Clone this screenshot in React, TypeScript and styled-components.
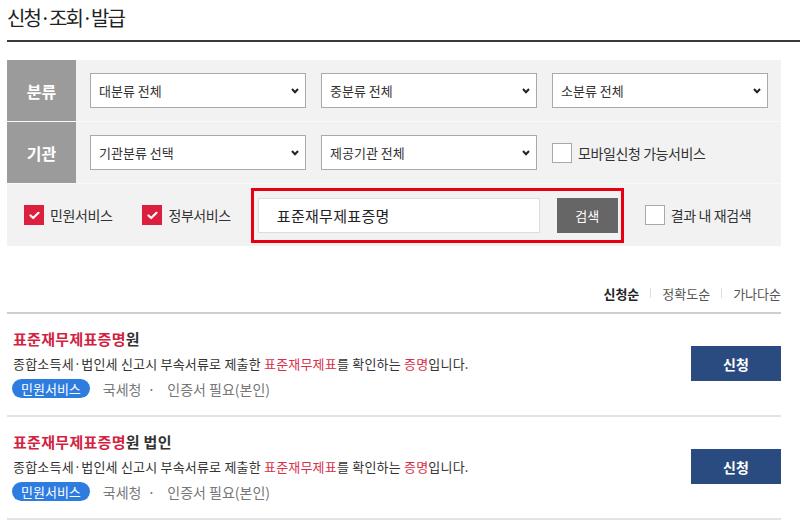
import React from "react";
import styled, { createGlobalStyle } from "styled-components";

const Global = createGlobalStyle`
  html, body { margin: 0; padding: 0; background: #fff; }
  body { font-family: "Noto Sans CJK KR", "Noto Sans", sans-serif; color: #333; }
  * { box-sizing: border-box; }
`;

const Page = styled.div`
  width: 800px;
  height: 530px;
  overflow: hidden;
  padding-left: 7px;
`;

const Header = styled.div`
  height: 42px;
  border-bottom: 2px solid #3a3a3a;
  display: flex;
  align-items: flex-start;
`;

const Title = styled.h1`
  margin: 4px 0 0;
  font-size: 20px;
  font-weight: 400;
  color: #222;
  letter-spacing: -2px;
  line-height: 28px;
`;

const Content = styled.div`
  width: 774px;
`;

const Filter = styled.div`
  margin-top: 18px;
  background: #f2f2f2;
  display: flex;
  flex-direction: column;
`;

const Row = styled.div`
  display: flex;
  align-items: center;
  height: 62px;
  border-bottom: 1px solid #f9f9f9;
`;

const Label = styled.div`
  width: 69px;
  flex-shrink: 0;
  align-self: stretch;
  background: #9b9b9b;
  color: #fff;
  font-size: 16px;
  font-weight: 700;
  display: flex;
  align-items: center;
  justify-content: center;
  margin-right: 14px;
`;

const SelectWrap = styled.div`
  position: relative;
  width: 216px;
  flex-shrink: 0;
  height: 35px;
  margin-right: 15px;
`;

const Select = styled.select`
  appearance: none;
  width: 100%;
  height: 100%;
  border: 1px solid #a9a9a9;
  background: #fff;
  font-family: inherit;
  font-size: 13px;
  color: #333;
  padding: 0 28px 0 8px;
  border-radius: 0;
  outline: none;
`;

const Chevron = styled.svg`
  position: absolute;
  right: 7px;
  top: 15px;
  pointer-events: none;
`;

const CheckLabel = styled.label<{ $gap?: number }>`
  display: flex;
  align-items: center;
  gap: 6px;
  font-size: 14px;
  letter-spacing: -0.4px;
  color: #333;
  margin-right: ${(p) => p.$gap ?? 0}px;
  white-space: nowrap;
`;

const Box = styled.span<{ $on?: boolean }>`
  width: 20px;
  height: 20px;
  flex-shrink: 0;
  display: inline-flex;
  align-items: center;
  justify-content: center;
  background: ${(p) => (p.$on ? "#dc1f3e" : "#fff")};
  border: 1px solid ${(p) => (p.$on ? "#dc1f3e" : "#a8a8a8")};
`;

const SearchRow = styled(Row)`
  padding-left: 17px;
  border-bottom: none;
`;

const SearchBox = styled.div`
  width: 373px;
  flex-shrink: 0;
  height: 55px;
  border: 3px solid #e80010;
  display: flex;
  align-items: center;
  padding: 0 3px 0 4px;
  gap: 17px;
  margin-right: 21px;
`;

const SearchInput = styled.div`
  width: 282px;
  height: 35px;
  background: #fff;
  border: 1px solid #dcdcdc;
  display: flex;
  align-items: center;
  padding-left: 18px;
  font-size: 15px;
  color: #222;
  letter-spacing: 0.3px;
`;

const SearchBtn = styled.button`
  width: 61px;
  height: 35px;
  border: none;
  background: #666;
  color: #fff;
  font-family: inherit;
  font-size: 13px;
`;

const SortBar = styled.div`
  margin-top: 36px;
  display: flex;
  justify-content: flex-end;
  align-items: center;
  gap: 11px;
  height: 22px;
  padding-bottom: 8px;
  box-sizing: content-box;
  border-bottom: 2px solid #cfcfcf;
`;

const SortItem = styled.span<{ $active?: boolean }>`
  font-size: 13px;
  color: ${(p) => (p.$active ? "#222" : "#555")};
  font-weight: ${(p) => (p.$active ? 700 : 400)};
`;

const SortSep = styled.span`
  width: 1px;
  height: 10px;
  background: #dedede;
`;

const Item = styled.div`
  display: flex;
  align-items: center;
  justify-content: space-between;
  padding: 12px 0 14px 6px;
  border-bottom: 2px solid #e3e3e3;
`;

const ItemBody = styled.div`
  display: flex;
  flex-direction: column;
`;

const ItemTitle = styled.div`
  font-size: 15px;
  font-weight: 700;
  color: #333;
  line-height: 25px;
  letter-spacing: 0.3px;
`;

const Hi = styled.span<{ $strong?: boolean }>`
  color: ${(p) => (p.$strong ? "#d3223f" : "#d8304a")};
`;

const Desc = styled.div`
  font-size: 13px;
  line-height: 25px;
  color: #333;
  letter-spacing: 0.2px;
`;

const Meta = styled.div`
  display: flex;
  align-items: center;
  gap: 13px;
  height: 25px;
  font-size: 14px;
  color: #777;
`;

const Dot = styled.span`
  margin: 0 12px 0 6px;
`;

const Pill = styled.span`
  display: inline-flex;
  align-items: center;
  height: 19px;
  padding: 0 9px;
  margin-left: -1px;
  border-radius: 10px;
  background: #2d7ce0;
  color: #fff;
  font-size: 13px;
`;

const ApplyBtn = styled.button`
  width: 90px;
  height: 35px;
  border: none;
  background: #294b80;
  color: #fff;
  font-family: inherit;
  font-size: 14px;
  font-weight: 700;
`;

const Check = () => (
  <svg width="11" height="9" viewBox="0 0 11 9">
    <path d="M1.5 4.5 L4.2 7 L9.5 1.8" fill="none" stroke="#fff" strokeWidth="2.2" strokeLinecap="round" strokeLinejoin="round" />
  </svg>
);

const Dropdown = ({ text }: { text: string }) => (
  <SelectWrap>
    <Select defaultValue={text}>
      <option>{text}</option>
    </Select>
    <Chevron width="8" height="6" viewBox="0 0 8 6">
      <path d="M1 1 L4 4.2 L7 1" fill="none" stroke="#222" strokeWidth="2" />
    </Chevron>
  </SelectWrap>
);

const results = [{ suffix: "원" }, { suffix: "원 법인" }];

export default function App() {
  return (
    <Page>
      <Global />
      <Header>
        <Title>신청·조회·발급</Title>
      </Header>
      <Content>
        <Filter>
          <Row>
            <Label>분류</Label>
            <Dropdown text="대분류 전체" />
            <Dropdown text="중분류 전체" />
            <Dropdown text="소분류 전체" />
          </Row>
          <Row>
            <Label>기관</Label>
            <Dropdown text="기관분류 선택" />
            <Dropdown text="제공기관 전체" />
            <CheckLabel>
              <Box />
              모바일신청 가능서비스
            </CheckLabel>
          </Row>
          <SearchRow>
            <CheckLabel $gap={30}>
              <Box $on>
                <Check />
              </Box>
              민원서비스
            </CheckLabel>
            <CheckLabel $gap={20}>
              <Box $on>
                <Check />
              </Box>
              정부서비스
            </CheckLabel>
            <SearchBox>
              <SearchInput>표준재무제표증명</SearchInput>
              <SearchBtn>검색</SearchBtn>
            </SearchBox>
            <CheckLabel>
              <Box />
              결과 내 재검색
            </CheckLabel>
          </SearchRow>
        </Filter>

        <SortBar>
          <SortItem $active>신청순</SortItem>
          <SortSep />
          <SortItem>정확도순</SortItem>
          <SortSep />
          <SortItem>가나다순</SortItem>
        </SortBar>

        {results.map((r, i) => (
          <Item key={i}>
            <ItemBody>
              <ItemTitle>
                <Hi $strong>표준재무제표증명</Hi>
                {r.suffix}
              </ItemTitle>
              <Desc>
                종합소득세·법인세 신고시 부속서류로 제출한 <Hi>표준재무제표</Hi>를 확인하는 <Hi>증명</Hi>입니다.
              </Desc>
              <Meta>
                <Pill>민원서비스</Pill>
                <span>
                  국세청<Dot>·</Dot>인증서 필요(본인)
                </span>
              </Meta>
            </ItemBody>
            <ApplyBtn>신청</ApplyBtn>
          </Item>
        ))}
      </Content>
    </Page>
  );
}
